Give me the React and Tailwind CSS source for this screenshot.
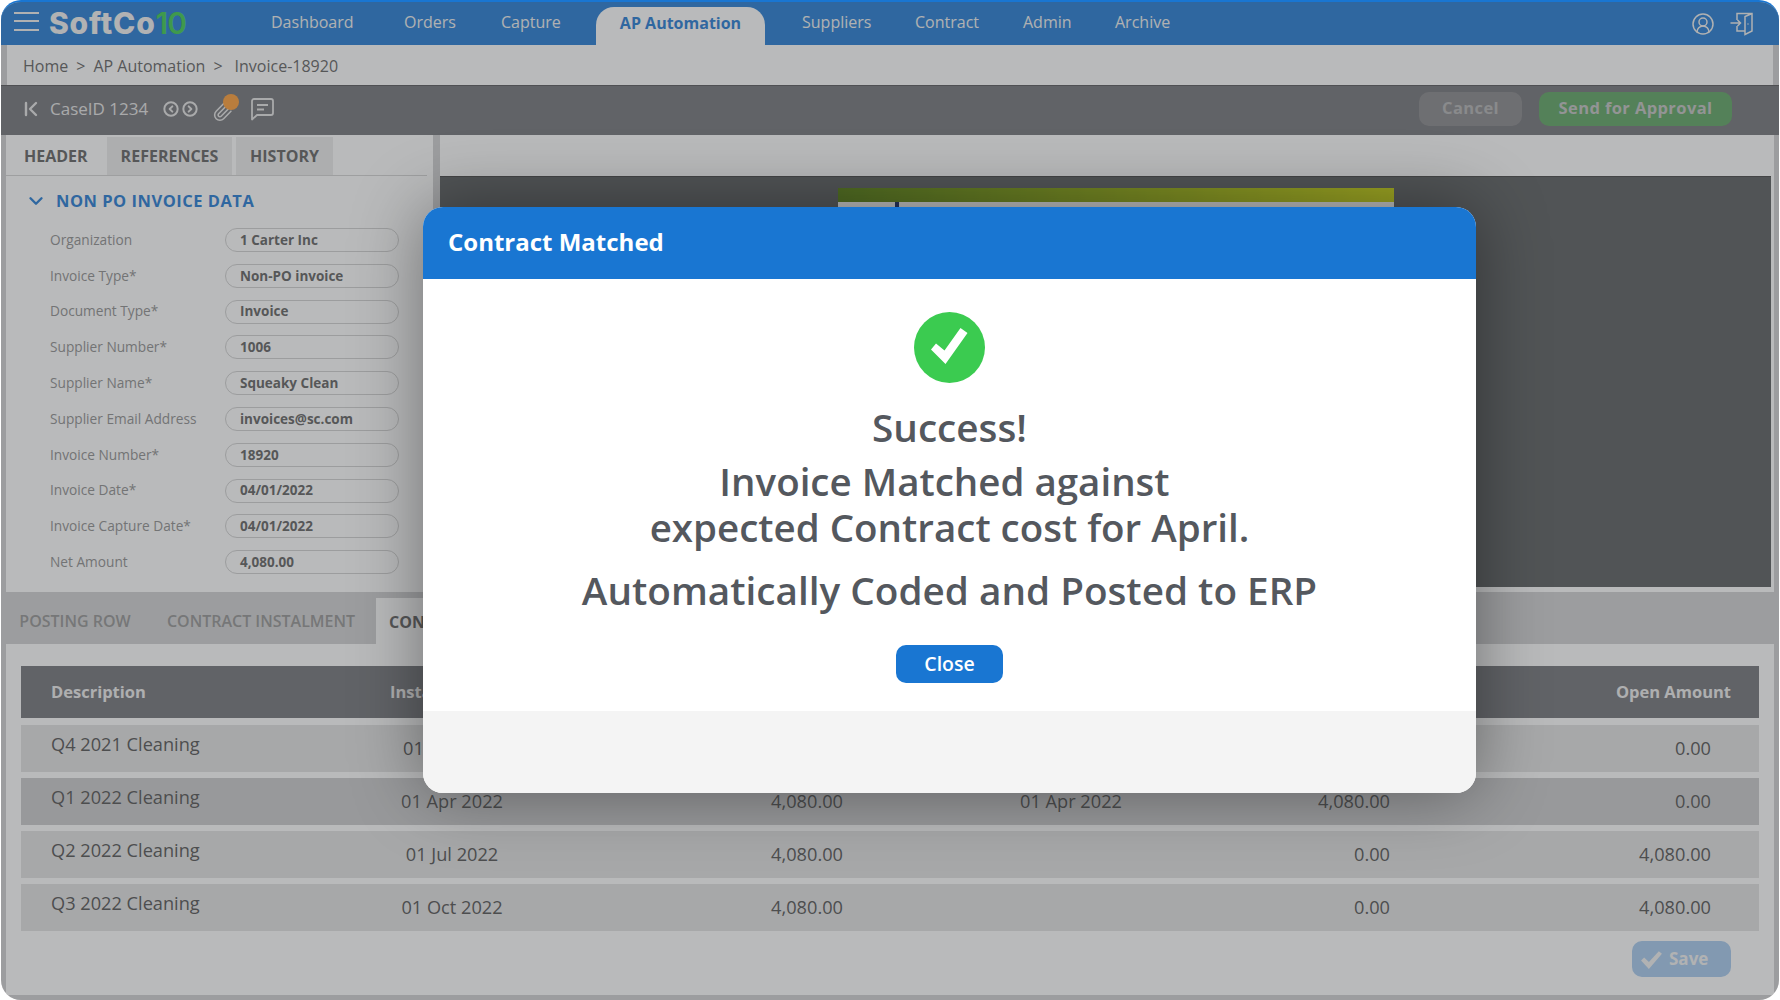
import { Paperclip, CircleChevronLeft, CircleChevronRight, CircleUserRound, ChevronDown, ChevronFirst } from "lucide-react";

const navItems = [
  { label: "Dashboard", className: "w-[133px]" },
  { label: "Orders", className: "w-[97px]" },
  { label: "Capture", className: "w-[97px]" },
];
const navItemsRight = [
  { label: "Suppliers", className: "w-[113px]" },
  { label: "Contract", className: "w-[108px]" },
  { label: "Admin", className: "w-[92px]" },
  { label: "Archive", className: "w-[80px]" },
];

const formRows = [
  ["Organization", "1 Carter Inc"],
  ["Invoice Type*", "Non-PO invoice"],
  ["Document Type*", "Invoice"],
  ["Supplier Number*", "1006"],
  ["Supplier Name*", "Squeaky Clean"],
  ["Supplier Email Address", "invoices@sc.com"],
  ["Invoice Number*", "18920"],
  ["Invoice Date*", "04/01/2022"],
  ["Invoice Capture Date*", "04/01/2022"],
  ["Net Amount", "4,080.00"],
];

const tableRows = [
  { name: "Q4 2021 Cleaning", date: "01 Jan 2022", amount: "4,080.00", paidOn: "01 Jan 2022", paid: "4,080.00", open: "0.00", bg: "bg-[#e1e1e2]" },
  { name: "Q1 2022 Cleaning", date: "01 Apr 2022", amount: "4,080.00", paidOn: "01 Apr 2022", paid: "4,080.00", open: "0.00", bg: "bg-[#c9c9ca]" },
  { name: "Q2 2022 Cleaning", date: "01 Jul 2022", amount: "4,080.00", paidOn: "", paid: "0.00", open: "4,080.00", bg: "bg-[#e1e1e2]" },
  { name: "Q3 2022 Cleaning", date: "01 Oct 2022", amount: "4,080.00", paidOn: "", paid: "0.00", open: "4,080.00", bg: "bg-[#e1e1e2]" },
];

const gridCols = "grid grid-cols-[349px_164px_309px_456px_91px_369px]";

function DoorIcon() {
  return (
    <svg width="24" height="24" viewBox="0 0 24 24" fill="none" stroke="currentColor" strokeWidth="1.5">
      <path d="M7 8V1.5h15v17.5l-7 3.5V4.5L21.500 1.700" />
      <path d="M15 19H7v-5" />
      <path d="M0.500 11h10M7.500 8l3 3-3 3" />
      <path d="M18 11.500v1" />
    </svg>
  );
}

function ChatIcon() {
  return (
    <svg width="24" height="24" viewBox="0 0 24 24" fill="none" stroke="currentColor" strokeWidth="1.8" strokeLinejoin="round" className="ml-[14px]">
      <path d="M4 2h17a2 2 0 0 1 2 2v12a2 2 0 0 1-2 2H7l-5 4.500V4a2 2 0 0 1 2-2z" />
      <path d="M7 8h11M7 12.500h7" />
    </svg>
  );
}

export default function App() {
  return (
    <div className="w-[1780px] h-[1000px] bg-white overflow-hidden font-['Open_Sans',sans-serif]">
      <div className="relative ml-[1px] w-[1778px] h-[1000px] rounded-[20px] overflow-hidden border-t-2 border-[#1976d2] bg-[#cfcfd0] flex flex-col">
        {/* Top nav */}
        <div className="h-[43px] shrink-0 bg-[#1976d2] flex items-end text-[#f0f0f0]">
          <div className="w-[13px] shrink-0" />
          <div className="w-[25px] h-[45px] flex flex-col justify-center gap-[6.500px] shrink-0 pb-[3px]">
            <div className="h-[2px] bg-[#f0f0f0]" />
            <div className="h-[2px] bg-[#f0f0f0]" />
            <div className="h-[2px] bg-[#f0f0f0]" />
          </div>
          <div className="ml-[10px] w-[222px] h-full flex items-center shrink-0 pb-[1px]">
            <span className="font-['Inter',sans-serif] font-extrabold text-[30px] tracking-[0.800px] leading-none text-[#f2f2f2]">SoftCo</span>
            <span className="font-['Inter',sans-serif] font-semibold text-[30px] tracking-[-1px] leading-none text-[#34c848]">10</span>
          </div>
          {navItems.map((item) => (
            <div key={item.label} className={`${item.className} h-full flex items-center text-[16px] pb-[4px] shrink-0`}>{item.label}</div>
          ))}
          <div className="w-[169px] h-[38px] ml-[-2px] shrink-0 bg-white rounded-t-[18px] flex items-center justify-center text-[#1976d2] font-bold text-[16px] pb-[6px]">AP Automation</div>
          <div className="w-[37px] shrink-0" />
          {navItemsRight.map((item) => (
            <div key={item.label} className={`${item.className} h-full flex items-center text-[16px] pb-[4px] shrink-0`}>{item.label}</div>
          ))}
          <div className="flex-1 h-full flex items-center justify-end gap-[15px] pr-[25px]">
            <CircleUserRound size={24} strokeWidth={1.5} />
            <DoorIcon />
          </div>
        </div>

        {/* Breadcrumb */}
        <div className="mx-[6px] h-[40px] shrink-0 bg-white flex items-center gap-[8px] pl-[16px] pt-[2px] text-[16px] text-[#5a5a5a]">
          <span>Home</span>
          <span>&gt;</span>
          <span>AP Automation</span>
          <span>&gt;</span>
          <span className="ml-[4px]">Invoice-18920</span>
        </div>

        {/* Toolbar */}
        <div className="h-[50px] shrink-0 bg-[#6d6e73] border-t border-[#4f4f53] flex items-center pl-[18px] pr-[47px] pb-[4px] text-[#e4e4e4]">
          <ChevronFirst size={24} strokeWidth={2.400} />
          <span className="ml-[7px] text-[17px]">CaseID 1234</span>
          <CircleChevronLeft size={16} strokeWidth={3} className="ml-[15px]" />
          <CircleChevronRight size={16} strokeWidth={3} className="ml-[3px]" />
          <div className="relative ml-[14px] w-[24px] h-[24px]">
            <Paperclip size={21} strokeWidth={1.800} className="mt-[4px]" />
            <div className="absolute left-[11px] top-[-3px] w-[16px] h-[16px] rounded-full bg-[#ff9a2e]" />
          </div>
          <ChatIcon />
          <div className="ml-auto flex items-center gap-[17px]">
            <button className="w-[103px] h-[34px] rounded-[10px] bg-[#838386] text-[#b0b0b1] font-bold text-[16.500px] tracking-[0.400px]">Cancel</button>
            <button className="w-[193px] h-[34px] rounded-[10px] bg-[#58a05c] text-[#c0c0c0] font-bold text-[16.500px] tracking-[0.400px]">Send for Approval</button>
          </div>
        </div>

        {/* Middle */}
        <div className="h-[452px] shrink-0 flex mx-[5px]">
          <div className="w-[427px] shrink-0 bg-white pt-[2px]">
            <div className="flex items-stretch h-[39px] border-b border-[#d2d2d2] mr-[6px] text-[16px] font-bold text-[#5a5a5a]">
              <div className="w-[101px] flex items-center pl-[18px]">HEADER</div>
              <div className="w-[125px] flex items-center justify-center bg-[#ececec]">REFERENCES</div>
              <div className="w-[97px] ml-[4px] flex items-center justify-center bg-[#ececec]">HISTORY</div>
            </div>
            <div className="flex items-center h-[50px] pl-[19px] gap-[9px] text-[#1976d2] font-bold text-[16.500px] tracking-[0.500px]">
              <ChevronDown size={22} strokeWidth={2.600} />
              <span>NON PO INVOICE DATA</span>
            </div>
            <div className="flex flex-col gap-[11.800px] mt-[2px]">
              {formRows.map(([label, value]) => (
                <div key={label} className="flex items-center h-[24px]">
                  <div className="w-[219px] pl-[44px] text-[13.700px] text-[#8a8a8a] shrink-0">{label}</div>
                  <div className="w-[174px] h-[24px] rounded-full border border-[#cfcfcf] pl-[14px] flex items-center font-bold text-[13.500px] text-[#5a5a5a]">{value}</div>
                </div>
              ))}
            </div>
          </div>
          <div className="w-[7px] shrink-0 bg-[#cfcfd0]" />
          <div className="flex-1 flex flex-col bg-white">
            <div className="h-[41px] shrink-0" />
            <div className="flex-1 bg-[#535558] pt-[11px] border-t border-[#3c3c3c] overflow-hidden mr-[3px]">
              <div className="ml-[398px] w-[556px] h-[300px] bg-white">
                <div className="h-[14px] bg-gradient-to-r from-[#4e7a00] to-[#cbd700]" />
                <div className="ml-[57px] w-[4px] h-[7px] bg-[#0b1f5c]" />
              </div>
            </div>
          </div>
        </div>

        {/* Lower tabs */}
        <div className="pt-[5px] mx-[5px] shrink-0 bg-white">
          <div className="h-[52px] bg-[#cfcfd0] flex items-end text-[16px] font-semibold">
            <div className="h-full w-[142px] flex items-center justify-center pt-[5px] pr-[4px] text-[#8f8f8f]">POSTING ROW</div>
            <div className="h-full w-[228px] flex items-center justify-center pt-[5px] pr-[2px] text-[#8f8f8f]">CONTRACT INSTALMENT</div>
            <div className="h-[46px] w-[200px] bg-white flex items-center pl-[13px] pt-[2px] font-bold text-[#5a5a5a]">CONTRACT PAYMENTS</div>
          </div>
        </div>

        {/* Table */}
        <div className="flex-1 mx-[5px] mb-[5px] bg-white pt-[22px] px-[15px] flex flex-col">
          <div className={`${gridCols} h-[52px] shrink-0 items-center bg-[#6d6e73] text-[#ededed] font-bold text-[16.500px]`}>
            <div className="pl-[30px]">Description</div>
            <div className="pl-[20px] whitespace-nowrap">Instalment Date</div>
            <div className="text-right">Amount</div>
            <div className="text-center">Paid Date</div>
            <div className="text-right">Paid</div>
            <div className="text-right pr-[28px]">Open Amount</div>
          </div>
          <div className="flex flex-col gap-[6px] mt-[7px]">
            {tableRows.map((row) => (
              <div key={row.name} className={`${gridCols} h-[47px] items-center text-[18.200px] text-[#4b4b4b] ${row.bg}`}>
                <div className="pl-[30px] mb-[7px]">{row.name}</div>
                <div className="text-center whitespace-nowrap">{row.date}</div>
                <div className="text-right">{row.amount}</div>
                <div className="text-center">{row.paidOn}</div>
                <div className="text-right">{row.paid}</div>
                <div className="text-right pr-[48px]">{row.open}</div>
              </div>
            ))}
          </div>
          <div className="flex justify-end mt-[10px] pr-[28px]">
            <button className="w-[99px] h-[36px] rounded-[10px] bg-[#a3c8ee] text-[#f2f2f2] font-bold text-[17px] flex items-center pl-[8px] gap-[6px]">
              <svg width="23" height="21" viewBox="0 0 22 20" fill="currentColor"><path d="M1 11l3-3 4.500 4.500L18 2l3 2.500L8.500 19z" /></svg>
              Save
            </button>
          </div>
        </div>

        {/* Dim overlay */}
        <div className="absolute inset-0 bg-[rgba(80,82,86,0.4)]" />

        {/* Modal */}
        <div className="absolute left-[422px] top-[205px] w-[1053px] h-[586px] rounded-[20px] overflow-hidden bg-white shadow-[0_0_70px_rgba(0,0,0,0.4)] flex flex-col">
          <div className="h-[72px] shrink-0 bg-[#1976d2] flex items-center pl-[25px] pb-[2px] text-white font-bold text-[24px]">Contract Matched</div>
          <div className="h-[432px] shrink-0 flex flex-col items-center pt-[33px] text-[#54585e] font-semibold text-center">
            <svg width="71" height="71" viewBox="0 0 71 71">
              <circle cx="35.500" cy="35.500" r="35.500" fill="#3bcb50" />
              <path d="M17 37.500l5-6 8.500 7L46.500 16l7 5-22 31z" fill="#fff" />
            </svg>
            <div className="mt-[21px] text-[38.700px] leading-[46px]">Success!</div>
            <div className="mt-[8px] text-[38.500px] leading-[46px]">
              Invoice Matched against{"\u00a0"}
              <br />
              expected Contract cost for April.
            </div>
            <div className="mt-[17px] text-[38.700px] leading-[46px]">Automatically Coded and Posted to ERP</div>
            <button className="mt-[32px] w-[107px] h-[38px] rounded-[10px] bg-[#1976d2] text-white font-semibold text-[19.500px]">Close</button>
          </div>
          <div className="flex-1 bg-[#f4f4f4]" />
        </div>
      </div>
    </div>
  );
}
